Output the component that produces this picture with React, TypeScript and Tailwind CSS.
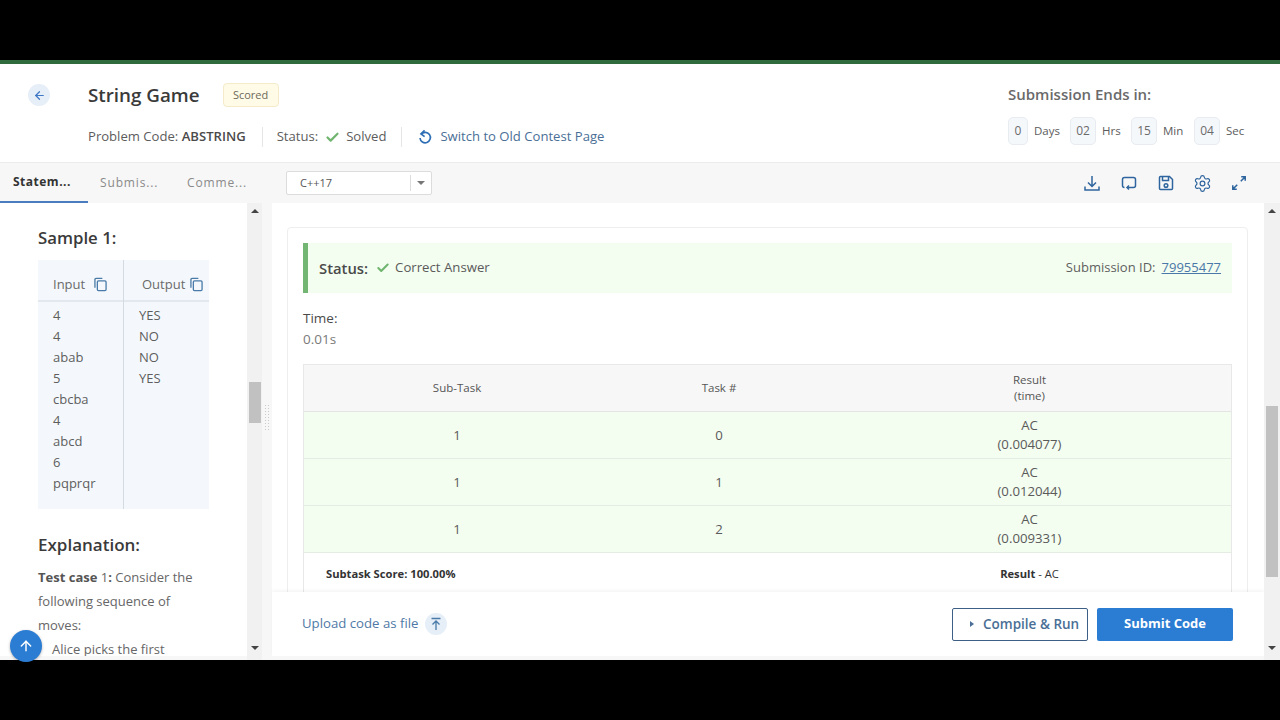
import { ArrowLeft, ArrowUp, Check, Settings } from 'lucide-react';

const sans = 'font-["Open_Sans","Noto_Sans",sans-serif]';

const inputLines = ['4', '4', 'abab', '5', 'cbcba', '4', 'abcd', '6', 'pqprqr'];
const outputLines = ['YES', 'NO', 'NO', 'YES'];

const taskRows = [
  { sub: '1', task: '0', time: '(0.004077)' },
  { sub: '1', task: '1', time: '(0.012044)' },
  { sub: '1', task: '2', time: '(0.009331)' },
];

function CopyIcon() {
  return (
    <svg width="13" height="15" viewBox="0 0 14 15" fill="none" stroke="#4a7ba8" strokeWidth="1.4">
      <path d="M1 11V2.2C1 1.5 1.5 1 2.2 1H9" />
      <rect x="3.6" y="3.6" width="9.4" height="10.6" rx="1.2" />
    </svg>
  );
}

function Counter({ value, label, width, gap }: { value: string; label: string; width: string; gap: string }) {
  return (
    <div className={`flex items-center ${gap}`}>
      <div className={`${width} h-[28px] flex items-center justify-center rounded-[5px] border border-[#e8ecf1] bg-[#f5f8fb] text-[12px] text-[#6b6b6b]`}>
        {value}
      </div>
      <span className="ml-[6px] text-[11.5px] text-[#5c5c5c]">{label}</span>
    </div>
  );
}

function ScrollBar({ width, thumbTop, thumbHeight }: { width: string; thumbTop: string; thumbHeight: string }) {
  return (
    <div className={`${width} shrink-0 h-full bg-[#f1f1f1] flex flex-col items-center relative`}>
      <div className="mt-[6px] w-0 h-0 border-x-[4px] border-x-transparent border-b-[4px] border-b-[#444]" />
      <div className={`${thumbTop} ${thumbHeight} w-[12px] bg-[#c1c1c1]`} />
      <div className="mt-auto mb-[10px] w-0 h-0 border-x-[4px] border-x-transparent border-t-[4px] border-t-[#444]" />
    </div>
  );
}

export default function App() {
  return (
    <div className={`w-[1280px] h-[720px] bg-black flex flex-col overflow-hidden ${sans}`}>
      <div className="h-[60px] shrink-0 bg-black" />
      <div className="h-[4px] shrink-0 bg-[#2f6b3c]" />

      {/* header */}
      <div className="h-[98px] shrink-0 bg-white flex justify-between">
        <div className="flex">
          <div className="ml-[28px] mt-[20px] w-[22px] h-[22px] rounded-full bg-[#e6eef8] flex items-center justify-center">
            <ArrowLeft size={13} color="#3f78c4" strokeWidth={2.2} />
          </div>
          <div className="ml-[38px]">
            <div className="flex items-center mt-[19px] h-[24px]">
              <h1 className="text-[18.8px] font-semibold text-[#3a3a3a] leading-none">String Game</h1>
              <span className="ml-[23px] w-[56px] h-[24px] flex items-center justify-center rounded-[4px] border border-[#f3ebc9] bg-[#fffbe6] text-[11px] text-[#6e6a5c]">
                Scored
              </span>
            </div>
            <div className="flex items-center mt-[20px] h-[20px] text-[13.1px] text-[#5c5c5c]">
              <span>Problem Code: <span className="font-semibold text-[#4a4a4a]">ABSTRING</span></span>
              <div className="ml-[16px] mr-[14px] w-px h-[20px] bg-[#e6e6e6]" />
              <span>Status:</span>
              <Check size={15} color="#6fb56f" strokeWidth={3.5} className="ml-[7px]" />
              <span className="ml-[6px]">Solved</span>
              <div className="mx-[15px] w-px h-[20px] bg-[#e6e6e6]" />
              <svg width="16" height="16" viewBox="0 0 16 16" fill="none" stroke="#2f6fb5" strokeWidth="1.7">
                <path d="M4.2 5.2A5.2 5.2 0 1 1 3 9" />
                <path d="M7.6 1.4 4 5l3.6 2.6" />
              </svg>
              <span className="ml-[7px] text-[13.1px] text-[#4a6f96]">Switch to Old Contest Page</span>
            </div>
          </div>
        </div>

        <div className="w-[272px] shrink-0 pt-[20px]">
          <div className="text-[15px] font-semibold leading-[20px] text-[#6a6a6a]">Submission Ends in:</div>
          <div className="flex mt-[13px]">
            <Counter value="0" label="Days" width="w-[20px]" gap="w-[62px]" />
            <Counter value="02" label="Hrs" width="w-[26px]" gap="w-[61px]" />
            <Counter value="15" label="Min" width="w-[26px]" gap="w-[63px]" />
            <Counter value="04" label="Sec" width="w-[26px]" gap="w-[56px]" />
          </div>
        </div>
      </div>

      {/* toolbar */}
      <div className="h-[41px] shrink-0 bg-[#f7f7f7] border-t border-[#ececec] flex">
        <div className="w-[88px] h-full border-b-2 border-[#4a7cc0] flex items-center pl-[13px] text-[12px] font-bold tracking-[0.5px] text-[#333]">
          Statem...
        </div>
        <div className="ml-[12px] w-[87px] flex items-center text-[12px] tracking-[0.85px] text-[#8a8a8a]">Submis...</div>
        <div className="w-[99px] flex items-center text-[12px] tracking-[0.85px] text-[#8a8a8a]">Comme...</div>
        <div className="mt-[8px] w-[146px] h-[24px] bg-white border border-[#dcdcdc] rounded-[2px] flex items-center">
          <span className="ml-[13px] text-[11px] text-[#555]">C++17</span>
          <div className="ml-auto w-px h-[16px] bg-[#dcdcdc]" />
          <div className="mx-[6px] w-0 h-0 border-x-[4px] border-x-transparent border-t-[4px] border-t-[#777]" />
        </div>
        <div className="ml-auto mr-[33px] flex items-center gap-[19px] text-[#2f659e]">
          <svg width="18" height="18" viewBox="0 0 18 18" fill="none" stroke="currentColor" strokeWidth="1.5">
            <path d="M9 2v10M5 8.5 9 12.5l4-4" />
            <path d="M2 12.5V16h14v-3.5" />
          </svg>
          <svg width="18" height="18" viewBox="0 0 18 18" fill="none" stroke="currentColor" strokeWidth="1.5">
            <path d="M4.5 13.5C3 13.5 2.5 13 2.5 11.5v-6C2.5 4 3 3.5 4.5 3.5h9c1.5 0 2 .5 2 2v6c0 1.5-.5 2-2 2H7.5" />
            <path d="M9 11.5 7 13.5l2 2" />
          </svg>
          <svg width="18" height="18" viewBox="0 0 18 18" fill="none" stroke="currentColor" strokeWidth="1.5">
            <path d="M2.5 3.5c0-.6.4-1 1-1h9l3 3v9c0 .6-.4 1-1 1h-11c-.6 0-1-.4-1-1z" />
            <path d="M5.5 2.5v4h6v-4" />
            <circle cx="9" cy="11.5" r="1.8" />
          </svg>
          <Settings size={19} strokeWidth={1.5} className="-ml-[1px]" />
          <svg width="16" height="16" viewBox="0 0 18 18" fill="none" stroke="currentColor" strokeWidth="1.7">
            <path d="M11 7l5-5M11.5 2H16v4.5" />
            <path d="M7 11l-5 5M2 11.5V16h4.5" />
          </svg>
        </div>
      </div>

      {/* main */}
      <div className="h-[457px] shrink-0 bg-[#f7f7f7] flex relative">
        <div className="w-[247px] shrink-0 h-[453px] bg-white overflow-hidden pl-[38px]">
          <h2 className="mt-[24px] text-[16.8px] font-semibold leading-[22px] text-[#3a3a3a]">Sample 1:</h2>
          <div className="mt-[11px] w-[171px] h-[249px] bg-[#f4f8fc] flex">
            <div className="w-[86px] border-r border-[#d3dae1]">
              <div className="h-[42px] border-b-2 border-[#e2e8ee] flex items-center pl-[15px] pt-[9px] gap-[9px] text-[13px] text-[#6a6a6a]">
                Input <CopyIcon />
              </div>
              <div className="pl-[15px] pt-[3px]">
                {inputLines.map((line, i) => (
                  <div key={i} className="h-[21px] text-[13px] leading-[21px] text-[#5e5e5e]">{line}</div>
                ))}
              </div>
            </div>
            <div className="flex-1">
              <div className="h-[42px] border-b-2 border-[#e2e8ee] flex items-center pl-[18px] pt-[9px] gap-[5px] text-[13px] text-[#6a6a6a]">
                Output <CopyIcon />
              </div>
              <div className="pl-[15px] pt-[3px]">
                {outputLines.map((line, i) => (
                  <div key={i} className="h-[21px] text-[13px] leading-[21px] text-[#5e5e5e]">{line}</div>
                ))}
              </div>
            </div>
          </div>
          <h2 className="mt-[25px] text-[17px] font-semibold leading-[22px] text-[#3a3a3a]">Explanation:</h2>
          <p className="mt-[9px] w-[175px] text-[13px] leading-[24px] text-[#666]">
            <span className="font-bold text-[#555]">Test case</span> 1<span className="font-bold text-[#555]">:</span> Consider the following sequence of moves:
          </p>
          <p className="ml-[14px] text-[13px] leading-[24px] text-[#666] whitespace-nowrap">Alice picks the first</p>
        </div>

        <ScrollBar width="w-[15px]" thumbTop="mt-[169px]" thumbHeight="h-[41px]" />

        <div className="w-[10px] shrink-0 flex flex-col items-center justify-center">
          <div className="w-[6px] h-[28px] -mt-[28px] bg-[radial-gradient(#c9c9c9_1px,transparent_1px)] bg-[length:3px_3px]" />
        </div>

        <div className="w-[992px] shrink-0 h-[453px] bg-white flex flex-col">
          <div className="h-[389px] overflow-hidden px-[15px] pt-[24px]">
            <div className="w-[961px] h-[500px] rounded-[4px] border border-[#eeeeee] px-[15px] pt-[15px]">
              <div className="h-[50px] bg-[#f3fdf0] border-l-[5px] border-[#73b673] flex items-center px-[11px]">
                <span className="text-[14.8px] font-semibold text-[#4a4a4a]">Status:</span>
                <Check size={14} color="#6fb56f" strokeWidth={3.5} className="ml-[8px]" />
                <span className="ml-[5px] text-[13.2px] text-[#5a5a5a]">Correct Answer</span>
                <span className="ml-auto text-[13px] text-[#5f5f5f]">Submission ID:</span>
                <a className="ml-[6px] text-[13px] text-[#4a78a8] underline">79955477</a>
              </div>
              <div className="mt-[15px] text-[13.5px] font-medium leading-[20px] text-[#4a4a4a]">Time:</div>
              <div className="mt-[1px] text-[13.5px] leading-[20px] text-[#7a7a7a]">0.01s</div>
              <div className="mt-[15px] w-[929px] border border-[#e8e8e8] border-b-0 text-[#555]">
                <div className="h-[47px] bg-[#f7f7f7] grid grid-cols-[306px_218px_1fr] items-center text-center text-[11.5px] font-medium leading-[16px] text-[#555] border-b border-[#e4e4e4]">
                  <div>Sub-Task</div>
                  <div>Task #</div>
                  <div>Result<br />(time)</div>
                </div>
                {taskRows.map((row) => (
                  <div key={row.task} className="h-[47px] bg-[#f3fdf0] grid grid-cols-[306px_218px_1fr] items-center text-center text-[13.2px] leading-[19px] text-[#5a5a5a] border-b border-[#e4ece4]">
                    <div>{row.sub}</div>
                    <div>{row.task}</div>
                    <div>AC<br />{row.time}</div>
                  </div>
                ))}
                <div className="h-[43px] grid grid-cols-[524px_1fr] items-center text-[11.2px] text-[#333]">
                  <div className="pl-[22px] font-bold">Subtask Score: 100.00%</div>
                  <div className="text-center"><span className="font-bold">Result</span> - AC</div>
                </div>
              </div>
            </div>
          </div>
          <div className="h-[64px] shrink-0 bg-white shadow-[0_-2px_3px_rgba(0,0,0,0.04)] relative flex items-center pl-[30px] pr-[31px]">
            <span className="text-[13.2px] text-[#4f79a6]">Upload code as file</span>
            <div className="ml-[7px] w-[22px] h-[22px] rounded-full bg-[#e6eef8] flex items-center justify-center">
              <svg width="12" height="14" viewBox="0 0 12 14" fill="none" stroke="#4a7ba8" strokeWidth="1.3">
                <path d="M1.5 1.5h9M6 13V4M2.5 7.5 6 4l3.5 3.5" />
              </svg>
            </div>
            <button className="ml-auto w-[136px] h-[33px] bg-white border border-[#3d5f85] rounded-[2px] flex items-center pl-[17px] text-[13.5px] font-semibold text-[#4a6f96]">
              <span className="w-0 h-0 border-y-[3.5px] border-y-transparent border-l-[4px] border-l-[#4a6f96] mr-[9px]" />
              Compile &amp; Run
            </button>
            <button className="ml-[9px] w-[136px] h-[33px] bg-[#2b7cd3] rounded-[2px] text-[13px] font-bold text-white">
              Submit Code
            </button>
          </div>
        </div>

        <ScrollBar width="w-[16px]" thumbTop="mt-[193px]" thumbHeight="h-[171px]" />

        <div className="absolute left-[10px] top-[427px] w-[32px] h-[32px] rounded-full bg-[#2b7cd3] shadow-[0_1px_3px_rgba(0,0,0,0.3)] flex items-center justify-center">
          <ArrowUp size={16} color="#ffffff" strokeWidth={2.2} />
        </div>
      </div>
    </div>
  );
}
